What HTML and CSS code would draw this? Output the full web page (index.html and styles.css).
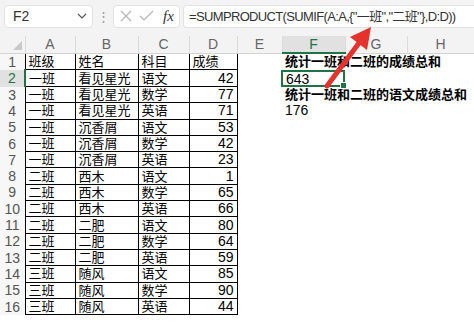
FILE: index.html
```html
<!DOCTYPE html>
<html lang="zh-CN">
<head>
  <meta charset="UTF-8">
  <title>SUMPRODUCT SUMIF</title>
  <link rel="stylesheet" href="styles.css">
</head>
<body>

<div class="page">
  <!-- 编辑栏 -->
  <div class="toolbar">
    <div class="namebox">
      <span>F2</span>
      <svg class="chev" width="10" height="6" viewBox="0 0 10 6"><path d="M1 1 L5 5 L9 1" fill="none" stroke="#555" stroke-width="1.2"/></svg>
    </div>
    <div class="dots">⋮</div>
    <div class="fxbox">
      <svg width="14" height="14" viewBox="0 0 14 14"><path d="M2 2 L12 12 M12 2 L2 12" stroke="#b5b5b5" stroke-width="1.2"/></svg>
      <svg width="15" height="14" viewBox="0 0 15 14"><path d="M1 7 L5 11 L14 2" fill="none" stroke="#b5b5b5" stroke-width="1.2"/></svg>
      <span class="fx">fx</span>
    </div>
    <div class="formula">=SUMPRODUCT(SUMIF(A:A,{"一班","二班"},D:D))</div>
  </div>

  <!-- 表格 -->
  <table class="grid">
    <colgroup>
      <col style="width:25px"><col style="width:50px"><col style="width:63px"><col style="width:51px">
      <col style="width:48px"><col style="width:45px"><col style="width:63px"><col style="width:62px"><col style="width:67px">
    </colgroup>
    <tr class="colhead">
      <th class="corner"><span class="tri"></span></th>
      <th>A</th><th>B</th><th>C</th><th>D</th><th>E</th><th class="on">F</th><th>G</th><th>H</th>
    </tr>
    <tr><th class="rh">1</th><td class="c">班级</td><td class="c">姓名</td><td class="c">科目</td><td class="c">成绩</td><td></td><td class="note">统计一班和二班的成绩总和</td><td></td><td></td></tr>
    <tr><th class="rh on">2</th><td class="c">一班</td><td class="c">看见星光</td><td class="c">语文</td><td class="c n">42</td><td></td><td class="sel"><div class="selbox">643<span class="handle"></span></div></td><td></td><td></td></tr>
    <tr><th class="rh">3</th><td class="c">一班</td><td class="c">看见星光</td><td class="c">数学</td><td class="c n">77</td><td></td><td class="note">统计一班和二班的语文成绩总和</td><td></td><td></td></tr>
    <tr><th class="rh">4</th><td class="c">一班</td><td class="c">看见星光</td><td class="c">英语</td><td class="c n">71</td><td></td><td class="val">176</td><td></td><td></td></tr>
    <tr><th class="rh">5</th><td class="c">一班</td><td class="c">沉香屑</td><td class="c">语文</td><td class="c n">53</td><td></td><td></td><td></td><td></td></tr>
    <tr><th class="rh">6</th><td class="c">一班</td><td class="c">沉香屑</td><td class="c">数学</td><td class="c n">42</td><td></td><td></td><td></td><td></td></tr>
    <tr><th class="rh">7</th><td class="c">一班</td><td class="c">沉香屑</td><td class="c">英语</td><td class="c n">23</td><td></td><td></td><td></td><td></td></tr>
    <tr><th class="rh">8</th><td class="c">二班</td><td class="c">西木</td><td class="c">语文</td><td class="c n">1</td><td></td><td></td><td></td><td></td></tr>
    <tr><th class="rh">9</th><td class="c">二班</td><td class="c">西木</td><td class="c">数学</td><td class="c n">65</td><td></td><td></td><td></td><td></td></tr>
    <tr><th class="rh">10</th><td class="c">二班</td><td class="c">西木</td><td class="c">英语</td><td class="c n">66</td><td></td><td></td><td></td><td></td></tr>
    <tr><th class="rh">11</th><td class="c">二班</td><td class="c">二肥</td><td class="c">语文</td><td class="c n">80</td><td></td><td></td><td></td><td></td></tr>
    <tr><th class="rh">12</th><td class="c">二班</td><td class="c">二肥</td><td class="c">数学</td><td class="c n">64</td><td></td><td></td><td></td><td></td></tr>
    <tr><th class="rh">13</th><td class="c">二班</td><td class="c">二肥</td><td class="c">英语</td><td class="c n">59</td><td></td><td></td><td></td><td></td></tr>
    <tr><th class="rh">14</th><td class="c">三班</td><td class="c">随风</td><td class="c">语文</td><td class="c n">85</td><td></td><td></td><td></td><td></td></tr>
    <tr><th class="rh">15</th><td class="c">三班</td><td class="c">随风</td><td class="c">数学</td><td class="c n">90</td><td></td><td></td><td></td><td></td></tr>
    <tr><th class="rh">16</th><td class="c">三班</td><td class="c">随风</td><td class="c">英语</td><td class="c n">44</td><td></td><td></td><td></td><td></td></tr>
  </table>

  <!-- 红色箭头 -->
  <svg class="arrow" width="474" height="322" viewBox="0 0 474 322">
    <line x1="327" y1="86" x2="359" y2="43" stroke="#e5322d" stroke-width="5" stroke-linecap="round"/>
    <polygon points="371,27 367,50 350,37" fill="#e5322d"/>
  </svg>
</div>

</body>
</html>
```

FILE: styles.css
```css
body {
  margin: 0;
  background-color: #ffffff;
  font-family: "Liberation Sans", "Noto Sans CJK SC", sans-serif;
}

.page {
  position: relative;
  width: 474px;
  height: 322px;
  overflow: hidden;
}

/* 编辑栏 */
.toolbar {
  display: flex;
  align-items: center;
  height: 36px;
  padding: 0 0 4px 4px;
  box-sizing: border-box;
  background-color: #f3f3f3;
}

.namebox {
  display: flex;
  flex-shrink: 0;
  align-items: center;
  justify-content: space-between;
  width: 89px;
  height: 23px;
  box-sizing: border-box;
  padding: 0 5px 0 8px;
  background-color: #fff;
  border: 1px solid #e2e2e2;
  border-radius: 4px;
  font-size: 14px;
  color: #333;
}

.dots {
  flex-shrink: 0;
  width: 20px;
  text-align: center;
  color: #9a9a9a;
  font-size: 13px;
}

.fxbox {
  display: flex;
  flex-shrink: 0;
  align-items: center;
  gap: 6px;
  width: 67px;
  height: 23px;
  box-sizing: border-box;
  padding: 0 4px 0 5px;
  background-color: #fff;
  border: 1px solid #e2e2e2;
  border-radius: 4px;
}

.fx {
  font-family: "Liberation Serif", serif;
  font-style: italic;
  font-size: 15px;
  color: #333;
  margin-left: 3px;
}

.formula {
  flex: 1;
  min-width: 0;
  overflow: hidden;
  height: 23px;
  margin-left: 3px;
  box-sizing: border-box;
  padding-left: 5px;
  line-height: 22px;
  background-color: #fff;
  border: 1px solid #e2e2e2;
  border-right: none;
  border-radius: 4px 0 0 4px;
  font-size: 13px;
  letter-spacing: -0.65px;
  color: #333;
  white-space: nowrap;
}

/* 表格 */
.grid {
  border-collapse: collapse;
  table-layout: fixed;
  width: 474px;
  font-size: 13px;
}

.grid tr {
  height: 16.3px;
}

.grid th {
  font-weight: normal;
  color: #555;
  padding: 0;
}

.colhead {
  height: 17px !important;
}

.colhead th {
  background-color: #f3f3f3;
  border-right: 1px solid #dadada;
  border-bottom: 1px solid #d4d4d4;
  font-size: 14px;
  color: #666;
}

.colhead th.on {
  background-color: #e1e1e1;
  border-bottom: 2px solid #217346;
  color: #217346;
}

.corner {
  position: relative;
}

.tri {
  position: absolute;
  right: 3px;
  bottom: 3px;
  width: 0;
  height: 0;
  border-left: 9px solid transparent;
  border-bottom: 9px solid #c8c8c8;
}

.rh {
  background-color: #f7f7f7;
  font-size: 14px;
  text-align: center;
  border-right: 1px solid #000;
}

.rh.on {
  background-color: #e1e1e1;
  border-right: 2px solid #217346;
  color: #217346;
}

.grid td {
  padding: 0 3px;
  white-space: nowrap;
  overflow: visible;
  color: #000;
  line-height: 15px;
}

.grid td.c {
  border: 1px solid #000;
}

.grid td.n {
  text-align: right;
  font-size: 14px;
}

.grid td.note {
  font-weight: bold;
}

.grid td.val {
  font-size: 14px;
}

.grid td.sel {
  padding: 0;
}

.selbox {
  position: relative;
  height: 17px;
  box-sizing: border-box;
  margin-left: -1px;
  padding: 0 3px;
  border: 2px solid #217346;
  font-size: 14px;
  line-height: 14px;
}

.handle {
  position: absolute;
  right: -4px;
  bottom: -4px;
  width: 5px;
  height: 5px;
  background-color: #217346;
  border: 1px solid #fff;
}

/* 箭头 */
.arrow {
  position: absolute;
  top: 0;
  left: 0;
  pointer-events: none;
}
```
